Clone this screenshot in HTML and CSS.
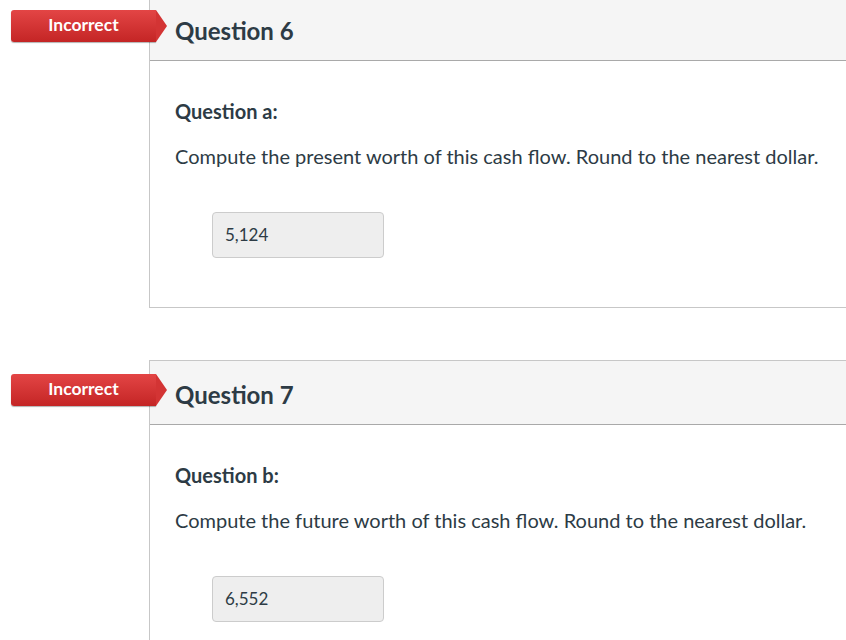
FILE: index.html
```html
<!DOCTYPE html>
<html lang="en">
<head>
    <meta charset="UTF-8">
    <title>Quiz Results</title>
    <link rel="stylesheet" href="styles.css">
</head>
<body>
    <div class="quiz">
        <div class="question">
            <span class="badge">Incorrect</span>
            <div class="question-header">Question 6</div>
            <div class="question-body">
                <p class="sub-title">Question a:</p>
                <p class="prompt">Compute the present worth of this cash flow. Round to the nearest dollar.</p>
                <div class="answer">5,124</div>
            </div>
        </div>

        <div class="question">
            <span class="badge">Incorrect</span>
            <div class="question-header">Question 7</div>
            <div class="question-body">
                <p class="sub-title">Question b:</p>
                <p class="prompt">Compute the future worth of this cash flow. Round to the nearest dollar.</p>
                <div class="answer">6,552</div>
            </div>
        </div>
    </div>
</body>
</html>
```

FILE: styles.css
```css
body {
    font-family: 'Lato', 'Noto Sans', sans-serif;
    background-color: #fff;
    color: #2d3b45;
    margin: 0;
}

.quiz {
    margin-top: -4px;
}

.question {
    position: relative;
    margin-left: 149px;
    margin-bottom: 52px;
    border: 1px solid #c7c7c7;
    border-right: none;
}

.question-header {
    height: 59px;
    line-height: 59px;
    padding: 4px 0 0 25px;
    background-color: #f5f5f5;
    border-bottom: 1px solid #a9a9a9;
    font-size: 24px;
    font-weight: bold;
}

.question-body {
    padding: 36px 25px 49px;
}

.sub-title {
    margin: 0;
    font-size: 20px;
    line-height: 28px;
    font-weight: bold;
}

.prompt {
    margin: 17px 0 0;
    font-size: 20px;
    line-height: 28px;
}

.answer {
    width: 158px;
    height: 44px;
    line-height: 44px;
    margin: 42px 0 0 37px;
    padding-left: 12px;
    background-color: #eee;
    border: 1px solid #ccc;
    border-radius: 4px;
    font-size: 17px;
}

.badge {
    position: absolute;
    top: 13px;
    left: -139px;
    width: 145px;
    height: 32px;
    line-height: 30px;
    box-sizing: border-box;
    text-align: center;
    color: #fff;
    font-size: 17.5px;
    font-weight: bold;
    background: linear-gradient(#e34545, #c42525);
    border-radius: 3px 0 0 3px;
    box-shadow: 0 1px 1px rgba(0, 0, 0, 0.3);
}

.badge::after {
    content: "";
    position: absolute;
    top: 0;
    right: -11px;
    border-top: 16px solid transparent;
    border-bottom: 16px solid transparent;
    border-left: 11px solid #d33434;
}
```
